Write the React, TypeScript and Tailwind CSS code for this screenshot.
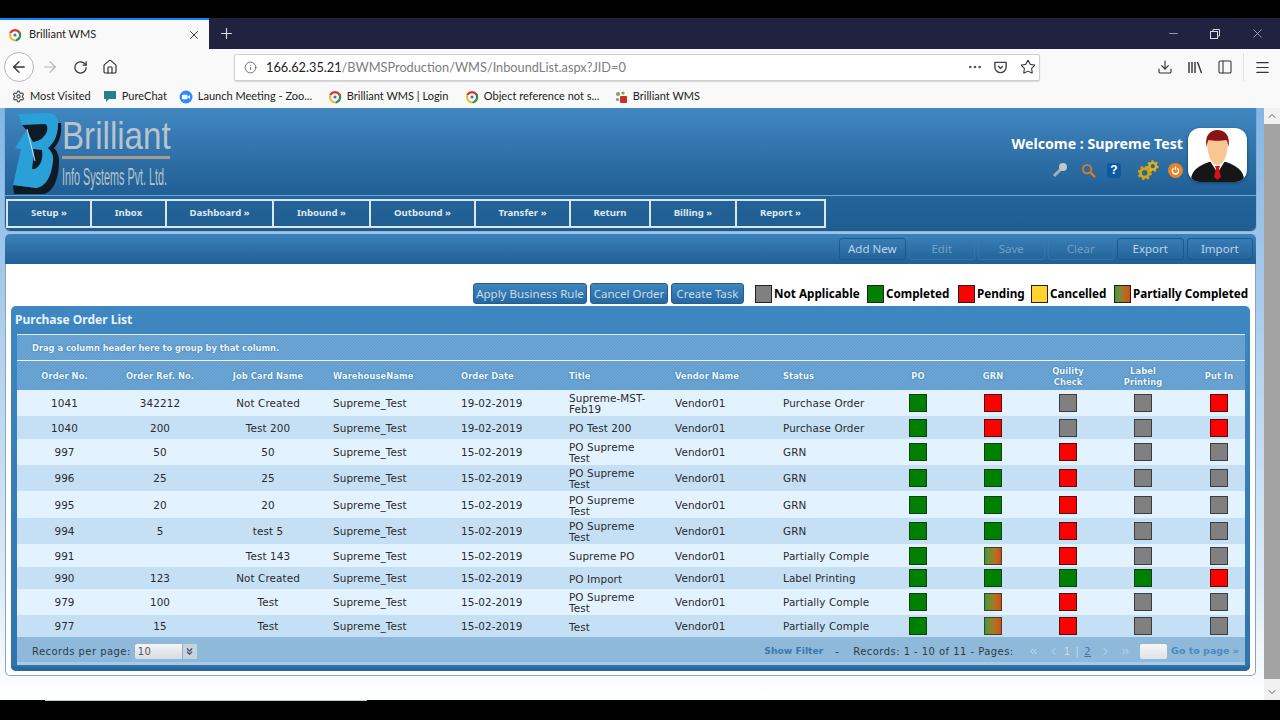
import { ArrowLeft, ArrowRight, ChevronDown, ChevronUp, ChevronsDown, ChevronsLeft, ChevronsRight, ChevronLeft, ChevronRight, Download, Home, Info, Menu, Minus, MoreHorizontal, PanelLeft, Plus, RotateCw, Settings, Star, X } from "lucide-react";

type Status = "g" | "r" | "n" | "p";

interface OrderRow {
  no: string;
  ref: string;
  job: string;
  date: string;
  title: string;
  status: string;
  marks: Status[];
  height: string;
  striped: boolean;
}

const ROWS: OrderRow[] = [
  { no: "1041", ref: "342212", job: "Not Created", date: "19-02-2019", title: "Supreme-MST-Feb19", status: "Purchase Order", marks: ["g", "r", "n", "n", "r"], height: "h-[26px]", striped: false },
  { no: "1040", ref: "200", job: "Test 200", date: "19-02-2019", title: "PO Test 200", status: "Purchase Order", marks: ["g", "r", "n", "n", "r"], height: "h-[23px]", striped: true },
  { no: "997", ref: "50", job: "50", date: "15-02-2019", title: "PO Supreme Test", status: "GRN", marks: ["g", "g", "r", "n", "n"], height: "h-[26px]", striped: false },
  { no: "996", ref: "25", job: "25", date: "15-02-2019", title: "PO Supreme Test", status: "GRN", marks: ["g", "g", "r", "n", "n"], height: "h-[26px]", striped: true },
  { no: "995", ref: "20", job: "20", date: "15-02-2019", title: "PO Supreme Test", status: "GRN", marks: ["g", "g", "r", "n", "n"], height: "h-[27px]", striped: false },
  { no: "994", ref: "5", job: "test 5", date: "15-02-2019", title: "PO Supreme Test", status: "GRN", marks: ["g", "g", "r", "n", "n"], height: "h-[26px]", striped: true },
  { no: "991", ref: "", job: "Test 143", date: "15-02-2019", title: "Supreme PO", status: "Partially Completed", marks: ["g", "p", "r", "n", "n"], height: "h-[23px]", striped: false },
  { no: "990", ref: "123", job: "Not Created", date: "15-02-2019", title: "PO Import", status: "Label Printing", marks: ["g", "g", "g", "g", "r"], height: "h-[22px]", striped: true },
  { no: "979", ref: "100", job: "Test", date: "15-02-2019", title: "PO Supreme Test", status: "Partially Completed", marks: ["g", "p", "r", "n", "n"], height: "h-[26px]", striped: false },
  { no: "977", ref: "15", job: "Test", date: "15-02-2019", title: "Test", status: "Partially Completed", marks: ["g", "p", "r", "n", "n"], height: "h-[22px]", striped: true },
];

const MENU = [
  { label: "Setup »", width: "w-[82px]" },
  { label: "Inbox", width: "w-[75px]" },
  { label: "Dashboard »", width: "w-[107px]" },
  { label: "Inbound »", width: "w-[97px]" },
  { label: "Outbound »", width: "w-[105px]" },
  { label: "Transfer »", width: "w-[95px]" },
  { label: "Return", width: "w-[80px]" },
  { label: "Billing »", width: "w-[86px]" },
  { label: "Report »", width: "w-[89px]" },
];

const TOOLBAR = [
  { label: "Add New", off: false },
  { label: "Edit", off: true },
  { label: "Save", off: true },
  { label: "Clear", off: true },
  { label: "Export", off: false },
  { label: "Import", off: false },
];

const LEGEND: { label: string; mark: string; gap: string }[] = [
  { label: "Not Applicable", mark: "bg-[#808080]", gap: "w-[112px]" },
  { label: "Completed", mark: "bg-[#008000]", gap: "w-[91px]" },
  { label: "Pending", mark: "bg-[#ff0000]", gap: "w-[73px]" },
  { label: "Cancelled", mark: "bg-[#ffd22e]", gap: "w-[83px]" },
  { label: "Partially Completed", mark: "bg-gradient-to-r from-[#2f9a3a] to-[#d8480f]", gap: "w-[135px]" },
];

const MARK_STYLE: Record<Status, string> = {
  g: "bg-[#008000] border-[#143d14]",
  r: "bg-[#ff0000] border-[#501010]",
  n: "bg-[#808080] border-[#3d3d3d]",
  p: "bg-gradient-to-r from-[#2f9a3a] to-[#d8480f] border-[#404030]",
};

const HATCH = "bg-[repeating-linear-gradient(135deg,#6ba5d3_0px,#6ba5d3_1.06px,#5f9ccd_1.06px,#5f9ccd_2.121px)]";
const HEAD = "font-['DejaVu_Sans',sans-serif] text-[8.3px] font-bold text-[#eef6fc] leading-[11px] [text-shadow:0_0_2px_#2f6c9e]";

function Swirl() {
  return (
    <svg width="14" height="14" viewBox="0 0 16 16" fill="none" strokeWidth="2.6" strokeLinecap="round">
      <path d="M3 5a6 6 0 0 1 10 0" stroke="#d9342b" />
      <path d="M13.5 6a6 6 0 0 1-4 8" stroke="#2f8f4a" />
      <path d="M7 14a6 6 0 0 1-4.5-7" stroke="#eebb22" />
      <circle cx="8" cy="8" r="1.8" fill="#3b78c4" />
    </svg>
  );
}

function Bookmark({ icon, label, width }: { icon: React.ReactNode; label: string; width?: string }) {
  return (
    <div className="flex items-center gap-[5px] whitespace-nowrap">
      {icon}
      <span className={width}>{label}</span>
    </div>
  );
}

function BrowserChrome() {
  return (
    <div className="font-['Lato',sans-serif] text-[#222]">
      <div className="flex h-[31px] bg-[#20223f]">
        <div className="flex h-full w-[209px] items-center border-t-2 border-[#0a84ff] bg-[#f9f9fa] pl-[8px] pr-[8px] text-[11px]">
          <Swirl />
          <span className="ml-[7px] flex-1">Brilliant WMS</span>
          <X size={14} strokeWidth={1.5} />
        </div>
        <Plus size={17} strokeWidth={1.6} className="my-auto ml-[9px] text-[#dcdce4]" />
        <div className="ml-auto flex items-center gap-[29px] pr-[15px] text-[#d8d8e0]">
          <Minus size={13} strokeWidth={1.2} />
          <svg width="12" height="12" viewBox="0 0 12 12" fill="none" stroke="currentColor">
            <rect x="1.5" y="3.5" width="7" height="7" />
            <path d="M4 3V1.5h6.5V8H9" />
          </svg>
          <X size={15} strokeWidth={1} />
        </div>
      </div>
      <div className="flex h-[36px] items-center bg-[#f9f9fa] pl-[4px] pr-[9px]">
        <div className="flex h-[30px] w-[30px] items-center justify-center rounded-full border border-[#b4b4b4] bg-white">
          <ArrowLeft size={18} strokeWidth={1.7} className="text-[#333]" />
        </div>
        <ArrowRight size={18} strokeWidth={1.5} className="ml-[7px] text-[#b5b5b5]" />
        <RotateCw size={15} strokeWidth={2} className="ml-[14px] text-[#333]" />
        <Home size={16} strokeWidth={1.8} className="ml-[14px] text-[#333]" />
        <div className="ml-[116px] flex h-[27px] w-[806px] items-center rounded-[2px] border border-[#cfcfd2] bg-white pl-[9px] pr-[3px] shadow-[0_1px_1px_#d8d8d8]">
          <Info size={13} strokeWidth={1.5} className="text-[#555]" />
          <span className="ml-[9px] pt-[2px] text-[12.75px] text-[#222]">
            166.62.35.21<span className="text-[#7d7d7d]">/BWMSProduction/WMS/InboundList.aspx?JID=0</span>
          </span>
          <MoreHorizontal size={16} className="ml-auto text-[#555]" />
          <svg width="15" height="15" viewBox="0 0 16 16" fill="none" stroke="#444" strokeWidth="1.5" className="ml-[10px]">
            <path d="M2 2.5h12v5a6 6 0 0 1-12 0z" strokeLinejoin="round" />
            <path d="M5.5 6.5 8 9l2.5-2.5" />
          </svg>
          <Star size={16} strokeWidth={1.6} className="ml-[12px] text-[#333]" />
        </div>
        <Download size={16} strokeWidth={1.7} className="ml-auto text-[#333]" />
        <svg width="16" height="15" viewBox="0 0 16 15" fill="none" stroke="#333" strokeWidth="1.4" className="ml-[14px]">
          <path d="M2 2v11M5 2v11M8 2v11M10.5 2l4 11" />
        </svg>
        <PanelLeft size={16} strokeWidth={1.6} className="ml-[14px] text-[#333]" />
        <div className="ml-[10px] h-[28px] w-px bg-[#e2e2e2]" />
        <Menu size={17} strokeWidth={1.7} className="ml-[10px] text-[#333]" />
      </div>
      <div className="flex h-[23px] items-center gap-[12px] bg-[#f9f9fa] pl-[12px] text-[11px]">
        <Bookmark icon={<Settings size={13} strokeWidth={2} className="text-[#444]" />} label="Most Visited" />
        <Bookmark
          icon={
            <svg width="14" height="13" viewBox="0 0 14 13">
              <path d="M1 1h12v8H6l-3 3V9H1z" fill="#25808f" />
            </svg>
          }
          label="PureChat"
        />
        <Bookmark
          icon={
            <svg width="14" height="14" viewBox="0 0 14 14">
              <circle cx="7" cy="7" r="6.5" fill="#2d8cff" />
              <rect x="3" y="4.8" width="5.5" height="4.4" rx="1" fill="#fff" />
              <path d="m9 6.5 2-1.4v3.800L9 7.500z" fill="#fff" />
            </svg>
          }
          label="Launch Meeting - Zoo..."
          width="w-[118px]"
        />
        <Bookmark icon={<Swirl />} label="Brilliant WMS | Login" width="w-[106px]" />
        <Bookmark icon={<Swirl />} label="Object reference not s..." width="w-[118px]" />
        <Bookmark
          icon={
            <svg width="14" height="14" viewBox="0 0 14 14">
              <rect x="6" y="6" width="7" height="7" rx="1" fill="#c9302c" />
              <circle cx="4" cy="4" r="2" fill="#8a9a6a" />
              <circle cx="9" cy="3" r="1.6" fill="#8a9a6a" />
              <circle cx="3.500" cy="9.500" r="1.600" fill="#8a9a6a" />
            </svg>
          }
          label="Brilliant WMS"
        />
      </div>
    </div>
  );
}

function Logo() {
  return (
    <div className="flex items-start">
      <svg width="49" height="86" viewBox="0 0 49 86" className="shrink-0">
        <path d="M1 85H30C40 84 46 70 46 52 46 46 44 42 41 39 46 34 49 26 48 14H45L35 39 25 79 0 76Z" fill="#0e1a24" />
        <path d="M5 5 35 4C42 4 46 9 45 16 45 26 41 34 35 39 39 43 41 47 40 52 39 64 34 78 23 79L0 76 8 40 2 39 13 22 9 16Z" fill="#2aa0d8" />
        <path d="M9 16 32 15C34 15 35 19 34 22 32 28 27 32 20 33L14 22Z" fill="#0e1a24" />
        <path d="M20 40 29 41C30 48 29 56 22 60H19L21 45Z" fill="#0e1a24" />
        <path d="M13 22 8 40 19 38 16 30Z" fill="#2aa0d8" />
        <path d="M14 20 22 52" stroke="#cfe3ee" strokeWidth="1" />
      </svg>
      <div className="flex w-[108px] flex-col pt-[7px] font-['Liberation_Sans',sans-serif] text-[#b9c3cc]">
        <span className="h-[39px] origin-left scale-x-[.85] whitespace-nowrap text-[39px] leading-[39px]">Brilliant</span>
        <div className="mt-[1px] h-[3px] bg-[#a49c8e]" />
        <span className="mt-[5px] h-[25px] origin-left scale-x-[.45] whitespace-nowrap text-[24px] leading-[25px]">Info Systems Pvt. Ltd.</span>
      </div>
    </div>
  );
}

function Avatar() {
  return (
    <div className="h-[54px] w-[59px] overflow-hidden rounded-[12px] bg-white shadow-[0_1px_3px_#12406a]">
      <svg width="59" height="54" viewBox="0 0 59 54">
        <path d="M3 52c0-10 9-15 18-18h17c9 3 18 8 18 18l-3 2H6z" fill="#161616" />
        <path d="M22 33h15l-7.500 12z" fill="#f4f4f4" />
        <path d="M27 38h5l-1 3 2 8-3.500 3-3.500-3 2-8z" fill="#d8101c" />
        <path d="M19 12c0 14 4 25 10.500 25S40 26 40 12z" fill="#f8c690" />
        <path d="M18.500 19c-2-12 4-17 11-17s13 5 11 17c-.5-3-1-5-2-7-4 1-14 1-18 0-1 2-1.500 4-2 7z" fill="#8a1414" />
      </svg>
    </div>
  );
}

function HeaderIcons() {
  return (
    <div className="mt-[5px] flex h-[24px] items-center pr-[64px]">
      <svg width="16" height="16" viewBox="0 0 16 16" className="mr-[13px]">
        <path d="M2 14 9 7" stroke="#a7aeb3" strokeWidth="3" />
        <circle cx="11" cy="5" r="4" fill="#c2c7ca" />
      </svg>
      <svg width="15" height="15" viewBox="0 0 16 16" fill="none" stroke="#db7a2c" className="mr-[11px]">
        <circle cx="6.500" cy="6.500" r="4.500" strokeWidth="2" />
        <path d="m10 10 5 5" strokeWidth="2.500" />
      </svg>
      <div className="mr-[17px] flex h-[15px] w-[14px] items-center justify-center rounded-[3px] bg-[#0d5aa3] font-['Liberation_Sans',sans-serif] text-[12px] font-bold text-white">?</div>
      <svg width="21" height="20" viewBox="0 0 22 20" className="mr-[9px]">
        <circle cx="7" cy="13" r="4.500" fill="none" stroke="#d8a512" strokeWidth="3" />
        <circle cx="7" cy="13" r="6.500" fill="none" stroke="#d8a512" strokeWidth="2" strokeDasharray="2.500 2.600" />
        <circle cx="15.500" cy="6" r="3.500" fill="none" stroke="#e3b015" strokeWidth="2.500" />
        <circle cx="15.500" cy="6" r="5.200" fill="none" stroke="#e3b015" strokeWidth="1.800" strokeDasharray="2.200 2.300" />
      </svg>
      <div className="flex h-[15px] w-[15px] items-center justify-center rounded-full bg-[#e8842c]">
        <svg width="9" height="9" viewBox="0 0 10 10" fill="none" stroke="#fff" strokeWidth="1.500">
          <path d="M3 2.500a3.500 3.500 0 1 0 4 0M5 .5v4" />
        </svg>
      </div>
    </div>
  );
}

function PageHeader() {
  return (
    <div className="rounded-b-[5px] bg-gradient-to-b from-[#2f77b0] to-[#1f5d91] shadow-[0_1px_1px_#1a4a72]">
      <div className="flex h-[87px] items-start justify-between bg-gradient-to-b from-[#4287c1] to-[#1f5f94] pl-[8px] pr-[9px] pt-[1px]">
        <Logo />
        <div className="relative flex flex-col items-end pt-[26px] font-['Noto_Sans',sans-serif]">
          <div className="pr-[64px] text-[14.2px] font-bold leading-[18px] text-white">Welcome : Supreme Test</div>
          <HeaderIcons />
          <div className="absolute right-0 top-[19px]">
            <Avatar />
          </div>
        </div>
      </div>
      <div className="h-[35px] border-t border-[#6fa7d4] pl-[1px] pt-[3px]">
        <div className="flex h-[29px] w-max border-2 border-[#d9e7f2]">
          {MENU.map((m, i) => (
            <div key={m.label} className={`flex items-center justify-center font-['Noto_Sans',sans-serif] text-[9.600px] font-bold text-[#dce9f4] ${m.width} ${i > 0 ? "border-l-2 border-[#d9e7f2]" : ""}`}>
              {m.label}
            </div>
          ))}
        </div>
      </div>
    </div>
  );
}

function Toolbar() {
  return (
    <div className="mt-[4px] flex h-[30px] items-center justify-end gap-[3px] rounded-t-[5px] bg-gradient-to-b from-[#3c82bb] to-[#1f5f94] pr-[3px]">
      {TOOLBAR.map((b) => (
        <div
          key={b.label}
          className={`flex h-[22px] w-[66.500px] items-center justify-center rounded-[3px] border font-['Noto_Sans',sans-serif] text-[11.500px] ${
            b.off ? "border-[#3a7bb0]/60 text-[#6f9fc6]" : "border-[#1d5a8c] text-[#bdd5e8]"
          }`}
        >
          {b.label}
        </div>
      ))}
    </div>
  );
}

function ActionRow() {
  return (
    <div className="flex h-[42px] items-end pb-[2px] pl-[467px] font-['Noto_Sans',sans-serif]">
      <div className="flex gap-[3px]">
        {["Apply Business Rule", "Cancel Order", "Create Task"].map((a, i) => (
          <div
            key={a}
            className={`flex h-[21px] items-center justify-center rounded-[3px] border border-[#24608f] bg-gradient-to-b from-[#3f86bf] to-[#2568a0] text-[11.500px] text-[#c9dcec] ${
              i === 0 ? "w-[114px]" : i === 1 ? "w-[78px]" : "w-[73px]"
            }`}
          >
            {a}
          </div>
        ))}
      </div>
      <div className="ml-[11px] flex h-[21px] items-center">
        {LEGEND.map((l) => (
          <div key={l.label} className={`flex items-center ${l.gap}`}>
            <div className={`h-[18px] w-[17px] shrink-0 border border-[#222] ${l.mark}`} />
            <span className="ml-[2px] whitespace-nowrap text-[11.700px] font-bold text-black">{l.label}</span>
          </div>
        ))}
      </div>
    </div>
  );
}

function Mark({ status }: { status: Status }) {
  return <div className={`mx-auto h-[18px] w-[18px] border-[1.5px] ${MARK_STYLE[status]}`} />;
}

function OrderTable() {
  return (
    <table className="w-[1228px] table-fixed border-collapse font-['DejaVu_Sans',sans-serif] text-[10.400px] tracking-[0.1px] text-[#2b2b2b]">
      <colgroup>
        <col className="w-[95px]" />
        <col className="w-[96px]" />
        <col className="w-[120px]" />
        <col className="w-[128px]" />
        <col className="w-[108px]" />
        <col className="w-[106px]" />
        <col className="w-[108px]" />
        <col className="w-[102px]" />
        <col className="w-[76px]" />
        <col className="w-[74px]" />
        <col className="w-[76px]" />
        <col className="w-[74px]" />
        <col className="w-[65px]" />
      </colgroup>
      <thead>
        <tr className={`h-[29px] ${HATCH}`}>
          <th className={`${HEAD} pt-[2px]`}>Order No.</th>
          <th className={`${HEAD} pt-[2px]`}>Order Ref. No.</th>
          <th className={`${HEAD} pt-[2px]`}>Job Card Name</th>
          <th className={`${HEAD} pl-[5px] pt-[2px] text-left`}>WarehouseName</th>
          <th className={`${HEAD} pl-[5px] pt-[2px] text-left`}>Order Date</th>
          <th className={`${HEAD} pl-[5px] pt-[2px] text-left`}>Title</th>
          <th className={`${HEAD} pl-[5px] pt-[2px] text-left`}>Vendor Name</th>
          <th className={`${HEAD} pl-[5px] pt-[2px] text-left`}>Status</th>
          <th className={`${HEAD} pt-[2px]`}>PO</th>
          <th className={`${HEAD} pt-[2px]`}>GRN</th>
          <th className={`${HEAD} px-[14px] pt-[2px]`}>Quility Check</th>
          <th className={`${HEAD} px-[14px] pt-[2px]`}>Label Printing</th>
          <th className={`${HEAD} pl-[13px] pt-[2px]`}>Put In</th>
        </tr>
      </thead>
      <tbody>
        {ROWS.map((r) => (
          <tr key={r.no} className={`${r.height} ${r.striped ? "bg-[#c5e0f5]" : "bg-[#e2f2fe]"}`}>
            <td className="pt-[2px] text-center">{r.no}</td>
            <td className="pt-[2px] text-center">{r.ref}</td>
            <td className="pt-[2px] text-center">{r.job}</td>
            <td className="pl-[5px] pt-[2px]">Supreme_Test</td>
            <td className="pl-[5px] pt-[2px]">{r.date}</td>
            <td className="pl-[5px] pt-[2px] leading-[11px]">
              <div className="w-[80px]">{r.title}</div>
            </td>
            <td className="pl-[5px] pt-[2px]">Vendor01</td>
            <td className="pl-[5px] pt-[2px]">
              <div className="w-[86px] overflow-hidden whitespace-nowrap">{r.status}</div>
            </td>
            {r.marks.map((m, i) => (
              <td key={i} className={i === 4 ? "pl-[13px]" : ""}>
                <Mark status={m} />
              </td>
            ))}
          </tr>
        ))}
      </tbody>
    </table>
  );
}

function TableFooter() {
  return (
    <div className="flex h-[28px] items-center justify-between border-b-[3px] border-[#a8cae5] bg-[#8fb9da] pl-[15px] pr-[6px] pt-[3px] font-['DejaVu_Sans',sans-serif] text-[10px] tracking-[0.45px] text-[#2e3a44]">
      <div className="flex items-center">
        <span>Records per page:</span>
        <div className="ml-[4px] flex h-[15px] w-[62px] items-center justify-between rounded-[2px] bg-gradient-to-b from-[#f4f4f4] to-[#d5dde3] pl-[3px] text-[#555]">
          <span>10</span>
          <div className="flex h-full w-[15px] items-center justify-center border-l border-[#9ab] bg-[#c4d4e0]">
            <ChevronsDown size={11} strokeWidth={2.5} className="text-[#445]" />
          </div>
        </div>
      </div>
      <div className="flex items-center">
        <span className="text-[9.200px] font-bold tracking-normal text-[#3a78ab]">Show Filter</span>
        <span className="ml-[12px]">-</span>
        <span className="ml-[14px]">Records: 1 - 10 of 11 - Pages:</span>
        <ChevronsLeft size={11} strokeWidth={2} className="ml-[14px] text-[#cfe0ee]" />
        <ChevronLeft size={11} strokeWidth={2} className="ml-[9px] text-[#cfe0ee]" />
        <span className="ml-[5px] text-[#c9dcec]">1</span>
        <span className="ml-[5px] text-[#c9dcec]">|</span>
        <span className="ml-[5px] text-[#3a78ab] underline">2</span>
        <ChevronRight size={11} strokeWidth={2} className="ml-[9px] text-[#cfe0ee]" />
        <ChevronsRight size={11} strokeWidth={2} className="ml-[9px] text-[#cfe0ee]" />
        <div className="ml-[9px] h-[15px] w-[27px] rounded-[2px] bg-gradient-to-b from-[#f6f6f6] to-[#dde3e8]" />
        <span className="ml-[4px] text-[9.500px] font-bold tracking-normal text-[#4a8ac0]">Go to page »</span>
      </div>
    </div>
  );
}

function OrderPanel() {
  return (
    <div className="mx-[5px] h-[365px] rounded-[5px] bg-gradient-to-b from-[#3f87c1] to-[#2f74ad] pl-[6px] pr-[5px] pt-[1px] shadow-[inset_0_-4px_0_#2a689c]">
      <div className="-ml-[2px] flex h-[26px] items-center font-['Noto_Sans',sans-serif] text-[12px] font-bold text-[#e8f2fa]">Purchase Order List</div>
      <div className="mt-[1px] border-t border-[#dceaf5]">
        <div className={`flex h-[25px] items-center pl-[15px] pt-[2px] ${HEAD} ${HATCH}`}>Drag a column header here to group by that column.</div>
        <div className="border-t border-[#eef6fc]" />
        <OrderTable />
        <TableFooter />
      </div>
    </div>
  );
}

function Scrollbar() {
  return (
    <div className="flex w-[16px] flex-col bg-[#f1f1f1] text-[#606060]">
      <div className="flex h-[16px] items-center justify-center">
        <ChevronUp size={12} strokeWidth={2} />
      </div>
      <div className="h-[555px] bg-[#a3a3a3]" />
      <div className="flex flex-1 items-end justify-center pb-[2px]">
        <ChevronDown size={12} strokeWidth={2} />
      </div>
    </div>
  );
}

export default function App() {
  return (
    <div className="flex h-[720px] w-[1280px] flex-col overflow-hidden bg-black">
      <div className="h-[18px] shrink-0" />
      <BrowserChrome />
      <div className="flex h-[592px] shrink-0">
        <div className="w-[1264px] bg-gradient-to-b from-[#84b6e5] via-[#dcebf8] via-80% to-white pl-[5px] pr-[8px]">
          <PageHeader />
          <Toolbar />
          <div className="h-[412px] rounded-b-[5px] border-b border-l border-r border-[#8fa3b5] bg-white">
            <ActionRow />
            <OrderPanel />
          </div>
        </div>
        <Scrollbar />
      </div>
      <div className="flex pl-[45px]">
        <div className="h-px w-[322px] bg-[#c8c8c8]" />
      </div>
    </div>
  );
}
